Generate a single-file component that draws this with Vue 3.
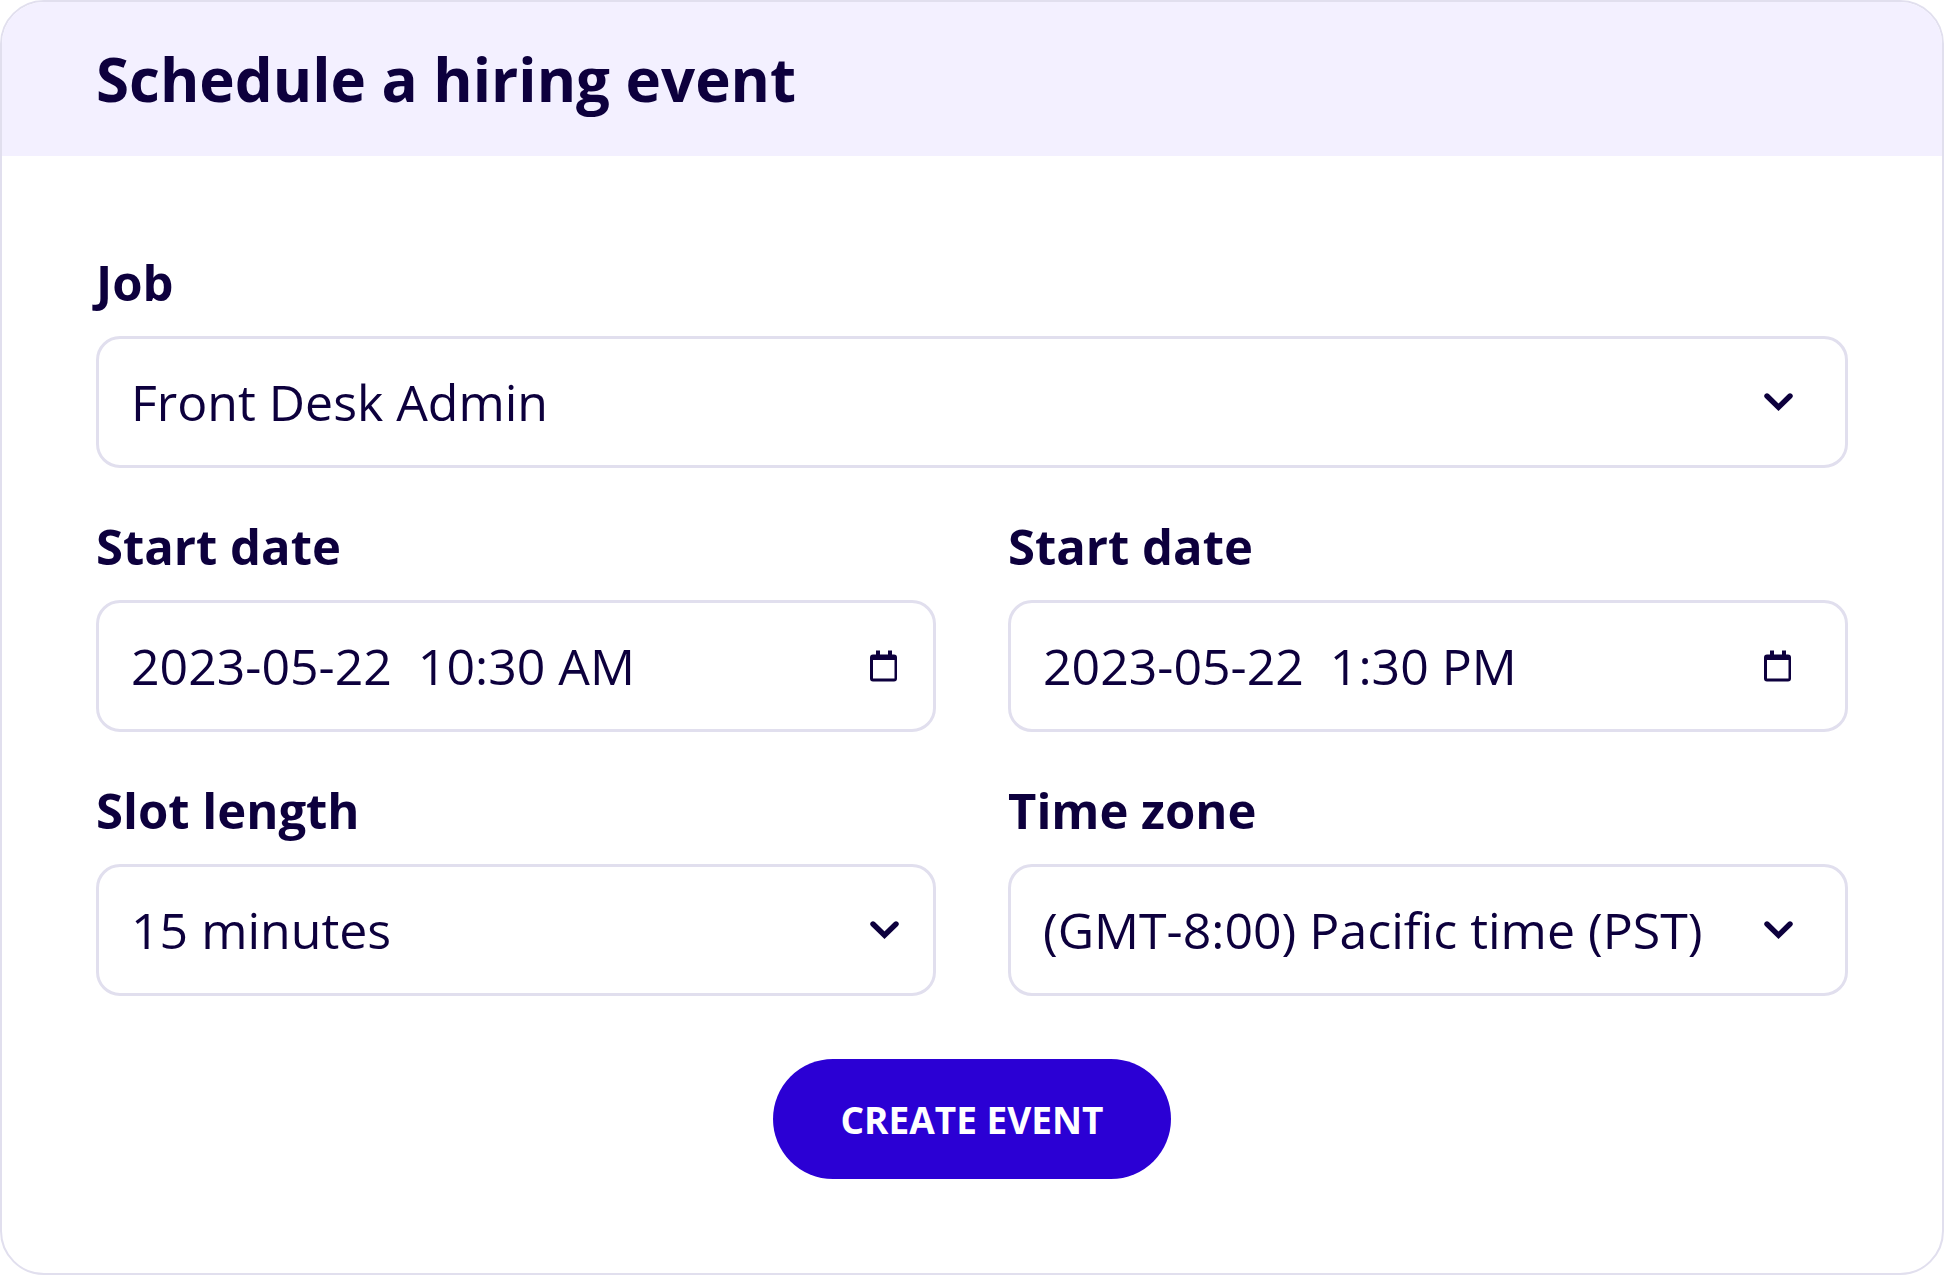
<script setup>
import { reactive } from "vue";

const emit = defineEmits(["submit"]);

const form = reactive({
  job: "Front Desk Admin",
  start: "2023-05-22  10:30 AM",
  end: "2023-05-22  1:30 PM",
  slot: "15 minutes",
  zone: "(GMT-8:00) Pacific time (PST)",
});

const fields = [
  { key: "job", label: "Job", type: "select", wide: true },
  { key: "start", label: "Start date", type: "date", tight: true },
  { key: "end", label: "Start date", type: "date" },
  { key: "slot", label: "Slot length", type: "select", tight: true },
  { key: "zone", label: "Time zone", type: "select" },
];
</script>

<template>
  <main class="card">
    <header class="card-header">
      <h1>Schedule a hiring event</h1>
    </header>
    <form class="card-body" @submit.prevent="emit('submit', form)">
      <div class="fields">
        <div
          v-for="field in fields"
          :key="field.key"
          class="field"
          :class="{ wide: field.wide }"
        >
          <label :for="field.key">{{ field.label }}</label>
          <div class="control" :class="{ tight: field.tight }">
            <template v-if="field.type === 'select'">
              <select :id="field.key" v-model="form[field.key]">
                <option>{{ form[field.key] }}</option>
              </select>
              <svg class="icon" viewBox="0 0 30 36" aria-hidden="true">
                <path
                  d="M4 12 15.5 23.3 27 12"
                  fill="none"
                  stroke="currentColor"
                  stroke-width="5.4"
                  stroke-linecap="round"
                />
              </svg>
            </template>
            <template v-else>
              <input :id="field.key" v-model="form[field.key]" type="text" />
              <svg class="icon" viewBox="0 0 30 36" aria-hidden="true">
                <path
                  fill="currentColor"
                  fill-rule="evenodd"
                  d="M7 2.5h4v4h8v-4h4v4h2a3 3 0 0 1 3 3v21a3 3 0 0 1-3 3H4a3 3 0 0 1-3-3v-21a3 3 0 0 1 3-3h3zM4 12v18.500h21.500V12z"
                />
              </svg>
            </template>
          </div>
        </div>
      </div>
      <button type="submit" class="submit">CREATE EVENT</button>
    </form>
  </main>
</template>

<style>
body {
  background-color: white;
}
</style>

<style scoped>
.card {
  box-sizing: border-box;
  min-height: 100vh;
  border: 2px solid #e1dfee;
  border-radius: 44px;
  overflow: hidden;
  background-color: white;
  color: #0d003d;
  font-family: "Open Sans", "Noto Sans", sans-serif;
}

.card-header {
  padding: 36px 94px;
  background-color: #f3f0ff;
}

h1 {
  margin: 0;
  font-size: 60px;
  line-height: 82px;
  font-weight: 700;
}

.card-body {
  display: flex;
  flex-direction: column;
  align-items: center;
  padding: 96px 94px 94px;
}

.fields {
  display: grid;
  grid-template-columns: 1fr 1fr;
  gap: 48px 72px;
  width: 100%;
}

.field {
  min-width: 0;
}

.wide {
  grid-column: 1 / -1;
}

label {
  display: block;
  margin-bottom: 24px;
  font-size: 49px;
  line-height: 60px;
  font-weight: 700;
}

.control {
  display: grid;
  grid-template-columns: 1fr auto;
  align-items: center;
  box-sizing: border-box;
  height: 132px;
  padding-right: 52px;
  border: 3px solid #e1dfee;
  border-radius: 24px;
}

.control:focus-within {
  border-color: #2b00d4;
}

.tight {
  padding-right: 34px;
}

select,
input {
  grid-area: 1 / 1 / 2 / 3;
  appearance: none;
  box-sizing: border-box;
  width: 100%;
  min-width: 0;
  height: 100%;
  margin: 0;
  padding: 0 32px;
  border: 0;
  outline: none;
  background: none;
  color: inherit;
  font: inherit;
  font-size: 50px;
}

.icon {
  grid-area: 1 / 2;
  width: 30px;
  height: 36px;
  pointer-events: none;
}

.submit {
  margin-top: 63px;
  height: 120px;
  padding: 0 67px;
  border: 0;
  border-radius: 60px;
  background-color: #2b00d4;
  color: white;
  font: inherit;
  font-size: 37px;
  font-weight: 700;
  cursor: pointer;
}
</style>
